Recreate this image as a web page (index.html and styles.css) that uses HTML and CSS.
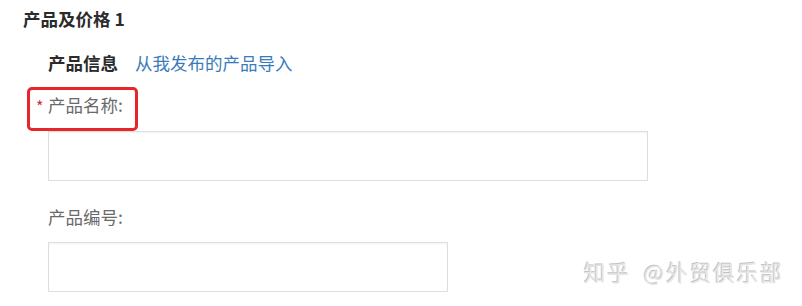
FILE: index.html
```html
<!DOCTYPE html>
<html lang="zh">
<head>
<meta charset="utf-8">
<link rel="stylesheet" href="styles.css">
</head>
<body>
<div class="page">
  <h2 class="section-title">产品及价格 1</h2>
  <div class="form">
    <div class="info-row">
      <span class="info-label">产品信息</span>
      <a class="import-link" href="#">从我发布的产品导入</a>
    </div>
    <div class="field">
      <div class="label required"><span class="star">*</span>产品名称:</div>
      <input class="input wide" type="text">
    </div>
    <div class="field second">
      <div class="label">产品编号:</div>
      <input class="input narrow" type="text">
    </div>
  </div>
  <div class="watermark">知乎 <span class="wm-handle">@外贸俱乐部</span></div>
</div>
</body>
</html>
```
FILE: styles.css
```css
html, body {
  margin: 0;
  padding: 0;
  background: #fff;
}
body {
  font-family: "Noto Sans CJK SC", "Noto Sans", "Liberation Sans", sans-serif;
  color: #333;
}
.page {
  position: relative;
  width: 802px;
  height: 306px;
  overflow: hidden;
}
.section-title {
  margin: 7px 0 0 23px;
  font-size: 17.5px;
  line-height: 24px;
  font-weight: 700;
  color: #2b2b2b;
}
.form {
  margin-left: 48px;
  display: flex;
  flex-direction: column;
}
.info-row {
  margin-top: 20px;
  display: flex;
  align-items: center;
  gap: 17px;
  line-height: 24px;
  font-size: 17.5px;
}
.info-label {
  font-weight: 700;
  color: #2b2b2b;
}
.import-link {
  color: #3a7cba;
  text-decoration: none;
}
.field {
  display: flex;
  flex-direction: column;
}
.label {
  position: relative;
  margin-top: 18px;
  font-size: 17.5px;
  line-height: 24px;
  color: #6a6a6a;
  margin-bottom: 14px;
}
.field.second .label {
  margin-top: 24px;
  margin-bottom: 13px;
}
.label.required::after {
  content: "";
  position: absolute;
  left: -21px;
  top: -6px;
  width: 105px;
  height: 38px;
  border: 3px solid #e8262a;
  border-radius: 5px;
}
.star {
  position: absolute;
  left: -12px;
  top: 1px;
  color: #c8353a;
  font-size: 16px;
}
.input {
  box-sizing: border-box;
  height: 50px;
  border: 1px solid #dedede;
  box-shadow: inset 0 1px 2px rgba(0,0,0,0.05);
  background: #fff;
  margin: 0;
  padding: 0 10px;
  outline: none;
}
.input.wide { width: 600px; }
.input.narrow { width: 400px; }
.watermark {
  position: absolute;
  left: 584px;
  top: 257px;
  font-size: 21.5px;
  line-height: 30px;
  letter-spacing: 2px;
  color: #e6e6e6;
  text-shadow: -1px -1px 0 #c4c4c4, 1px 1px 0 #fff;
}
.wm-handle {
  margin-left: 6px;
}
```
